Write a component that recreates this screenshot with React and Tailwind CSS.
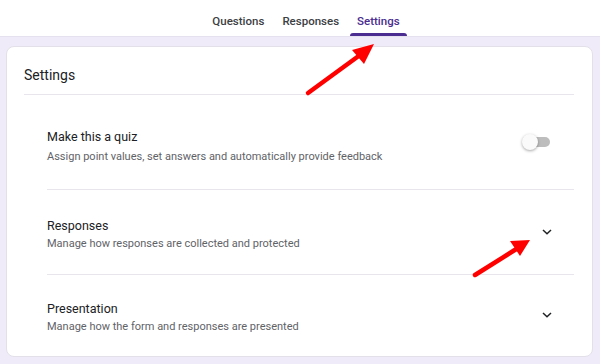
import React from "react";

function Chevron() {
  return (
    <svg width="12" height="8" viewBox="0 0 12 8" className="block">
      <path d="M2 2 L6 5.8 L10 2" fill="none" stroke="#202124" strokeWidth="1.5" />
    </svg>
  );
}

function Toggle() {
  return (
    <div className="relative w-[30px] h-[16px] flex items-center">
      <div className="ml-[6px] w-[22px] h-[10px] rounded-full bg-[#bdbdbd]" />
      <div className="absolute left-0 top-0 w-[16px] h-[16px] rounded-full bg-[#fafafa] shadow-[0_1px_3px_rgba(0,0,0,0.35)]" />
    </div>
  );
}

function Item({ title, sub, right, h, pt, gap }) {
  return (
    <div className={`flex items-center ${h} ${pt} pl-[23px] pr-[22px]`}>
      <div className={`flex-1 flex flex-col ${gap}`}>
        <div className="text-[12.5px] leading-[18px] text-[#202124]">{title}</div>
        <div className="text-[11px] leading-[16px] text-[#5f6368]">{sub}</div>
      </div>
      {right}
    </div>
  );
}

export default function App() {
  return (
    <div
      className="relative w-[600px] h-[364px] bg-[#f0ebf8] flex flex-col overflow-hidden"
      style={{ fontFamily: "Roboto, 'Liberation Sans', sans-serif" }}
    >
      <div className="h-[37px] bg-white flex justify-center items-end border-b border-[#e6e1ef] pl-[12px]">
        <div className="flex gap-[4px] text-[11.5px] font-medium text-[#3c4043]">
          <div className="px-[7px] h-[36px] pt-[7px] flex items-center">Questions</div>
          <div className="px-[7px] h-[36px] pt-[7px] flex items-center">Responses</div>
          <div className="relative px-[7px] h-[36px] pt-[7px] flex items-center text-[#4a2d8f]">
            Settings
            <div className="absolute left-0 right-0 bottom-0 h-[3px] rounded-t-[3px] bg-[#4b2c91]" />
          </div>
        </div>
      </div>

      <div className="ml-[6px] mt-[9px] w-[587px] h-[311px] bg-white rounded-[8px] border border-[#e4e0ea] flex flex-col pl-[17px] pr-[18px]">
        <div className="h-[47px] flex items-center pt-[10px] text-[14px] text-[#202124]">Settings</div>
        <div className="h-px bg-[#e8e6ec]" />
        <Item
          title="Make this a quiz"
          sub="Assign point values, set answers and automatically provide feedback"
          h="h-[94px]"
          pt="pt-[9px]"
          gap="gap-[3px]"
          right={<div className="-mt-[9px]"><Toggle /></div>}
        />
        <div className="ml-[23px] h-px bg-[#e8e6ec]" />
        <Item
          title="Responses"
          sub="Manage how responses are collected and protected"
          h="h-[84px]"
          pt="pt-[5px]"
          gap="gap-[1px]"
          right={<div className="mr-[-1px] -mt-[5px]"><Chevron /></div>}
        />
        <div className="ml-[23px] h-px bg-[#e8e6ec]" />
        <Item
          title="Presentation"
          sub="Manage how the form and responses are presented"
          h="h-[80px]"
          pt="pt-[5px]"
          gap="gap-[1px]"
          right={<div className="mr-[-1px] -mt-[5px]"><Chevron /></div>}
        />
      </div>

      <svg className="absolute left-0 top-0 pointer-events-none" width="600" height="364" viewBox="0 0 600 364">
        <line x1="308" y1="93" x2="360" y2="55" stroke="#ff0000" strokeWidth="4.5" strokeLinecap="round" />
        <polygon points="374,44 352,50 364,64" fill="#ff0000" />
        <line x1="475" y1="275" x2="518" y2="248" stroke="#ff0000" strokeWidth="4.5" strokeLinecap="round" />
        <polygon points="530,240 510,241 520,256" fill="#ff0000" />
      </svg>
    </div>
  );
}
